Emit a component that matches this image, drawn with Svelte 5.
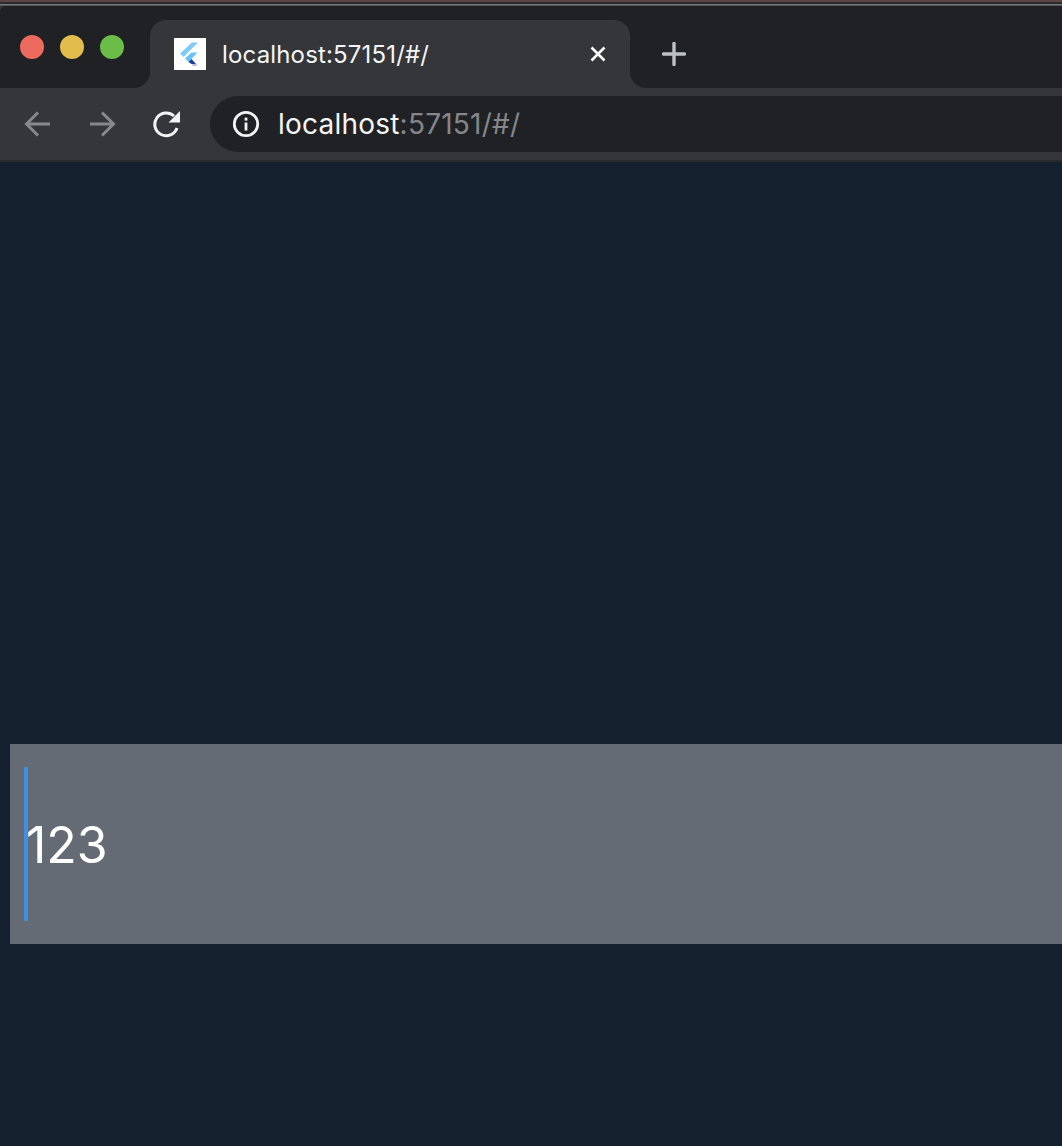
<script lang="ts">
  const host = "localhost";
  const rest = ":57151/#/";
  const value = "123";
</script>

<div class="window">
  <div class="bezel"></div>
  <div class="tabstrip">
    <div class="lights">
      <span class="light red"></span>
      <span class="light yellow"></span>
      <span class="light green"></span>
    </div>
    <div class="tab-slot">
      <div class="tab">
        <svg class="favicon" viewBox="0 0 32 32" width="32" height="32">
          <rect width="32" height="32" fill="#fff" />
          <path d="M24 4.500h-6L6 15.500l3.500 3.500z" fill="#7ccbf9" />
          <path d="M23.500 14.500h-6l-6.500 6 3.500 3.500z" fill="#68c1f7" />
          <path d="M14.500 24l3-3 4.500 5h-4.500z" fill="#123f9e" />
          <path d="M17.500 26.500l4.500-.500 2 1.500-5 .500z" fill="#aab7d6" />
        </svg>
        <span class="tab-title">{host}{rest}</span>
        <svg class="tab-close" viewBox="0 0 16 16" width="16" height="16">
          <path d="M1.500 1.500l13 13M14.500 1.500l-13 13" stroke="#fff" stroke-width="2.600" fill="none" />
        </svg>
      </div>
    </div>
    <div class="strip-rest">
      <svg class="new-tab" viewBox="0 0 24 24" width="24" height="24">
        <path d="M12 1.500v21M1.500 12h21" stroke="#bdc1c6" stroke-width="3.400" stroke-linecap="round" fill="none" />
      </svg>
    </div>
  </div>

  <div class="toolbar">
    <svg class="nav" viewBox="0 0 28 28" width="28" height="28">
      <path d="M26 14H3M14 2.500L2.500 14 14 25.500" stroke="#87898c" stroke-width="3" fill="none" />
    </svg>
    <svg class="nav" viewBox="0 0 28 28" width="28" height="28">
      <path d="M2 14h23M14 2.500L25.500 14 14 25.500" stroke="#87898c" stroke-width="3" fill="none" />
    </svg>
    <svg class="nav" viewBox="0 0 28 28" width="28" height="28">
      <path d="M25 18a11.400 11.400 0 1 1-3-12" stroke="#f1f3f4" stroke-width="3" fill="none" />
      <path d="M28 1v11.500H16.500z" fill="#f1f3f4" />
    </svg>
    <div class="omnibox">
      <svg class="info" viewBox="0 0 28 28" width="28" height="28">
        <circle cx="14" cy="14" r="11.700" stroke="#f1f3f4" stroke-width="2.800" fill="none" />
        <rect x="12.600" y="12.500" width="2.800" height="8" fill="#f1f3f4" />
        <rect x="12.600" y="7.600" width="2.800" height="3" fill="#f1f3f4" />
      </svg>
      <span class="url">{host}<span class="url-rest">{rest}</span></span>
    </div>
  </div>
  <div class="toolbar-edge"></div>

  <main class="page">
    <div class="field">
      <span class="caret"></span>
      <span class="field-text">{value}</span>
    </div>
  </main>
</div>

<style>
  :global(body) {
    margin: 0;
    background: #14202e;
  }

  .window {
    height: 1146px;
    overflow: hidden;
    display: flex;
    flex-direction: column;
    font-family: Inter, "Liberation Sans", sans-serif;
  }

  .bezel {
    height: 6px;
    background: linear-gradient(#5e4545 0 2px, #2a2a2c 2px 4px, #77787a 4px 5px, #55565a 5px 6px);
  }

  .tabstrip {
    height: 82px;
    display: flex;
    background: #35363a;
  }

  .lights {
    width: 150px;
    box-sizing: border-box;
    padding: 29px 0 0 20px;
    display: flex;
    gap: 16px;
    background: #202124;
    border-top-left-radius: 6px;
    border-bottom-right-radius: 16px;
  }

  .light {
    width: 24px;
    height: 24px;
    border-radius: 50%;
  }

  .red { background: #ed6a5e; }
  .yellow { background: #e2bd4c; }
  .green { background: #6cbd47; }

  .tab-slot {
    width: 480px;
    background: #202124;
    padding-top: 14px;
    display: flex;
  }

  .tab {
    flex: 1;
    display: flex;
    align-items: center;
    box-sizing: border-box;
    padding: 0 24px;
    background: #35363a;
    border-radius: 16px 16px 0 0;
  }

  .favicon {
    flex: none;
  }

  .tab-title {
    flex: 1;
    margin-left: 16px;
    font-size: 24px;
    letter-spacing: 0.16px;
    color: #f4f5f6;
  }

  .tab-close {
    flex: none;
  }

  .strip-rest {
    flex: 1;
    background: #202124;
    border-bottom-left-radius: 16px;
    padding: 36px 0 0 32px;
  }

  .new-tab {
    display: block;
  }

  .toolbar {
    height: 72px;
    box-sizing: border-box;
    padding: 8px 0 8px 24px;
    display: flex;
    align-items: center;
    background: #35363a;
  }

  .nav {
    flex: none;
    margin-right: 36px;
  }

  .nav:nth-child(3) {
    margin-right: 30px;
  }

  .omnibox {
    flex: 1;
    height: 56px;
    display: flex;
    align-items: center;
    padding-left: 22px;
    background: #202124;
    border-radius: 28px 0 0 28px;
  }

  .info {
    flex: none;
  }

  .url {
    margin-left: 18px;
    font-size: 28px;
    letter-spacing: 0.22px;
    color: #f4f5f6;
  }

  .url-rest {
    color: #85878a;
  }

  .toolbar-edge {
    height: 2px;
    background: #2a2b2e;
  }

  .page {
    flex: 1;
    padding: 582px 0 0 10px;
    background: #14202e;
  }

  .field {
    height: 200px;
    display: flex;
    align-items: center;
    padding-left: 14px;
    background: #646b75;
  }

  .caret {
    flex: none;
    width: 4px;
    height: 154px;
    border-radius: 1px;
    background: #3f8fe6;
    margin-right: -2px;
  }

  .field-text {
    font-size: 50px;
    font-weight: 400;
    line-height: 62px;
    padding-top: 2px;
    color: #fff;
  }
</style>
